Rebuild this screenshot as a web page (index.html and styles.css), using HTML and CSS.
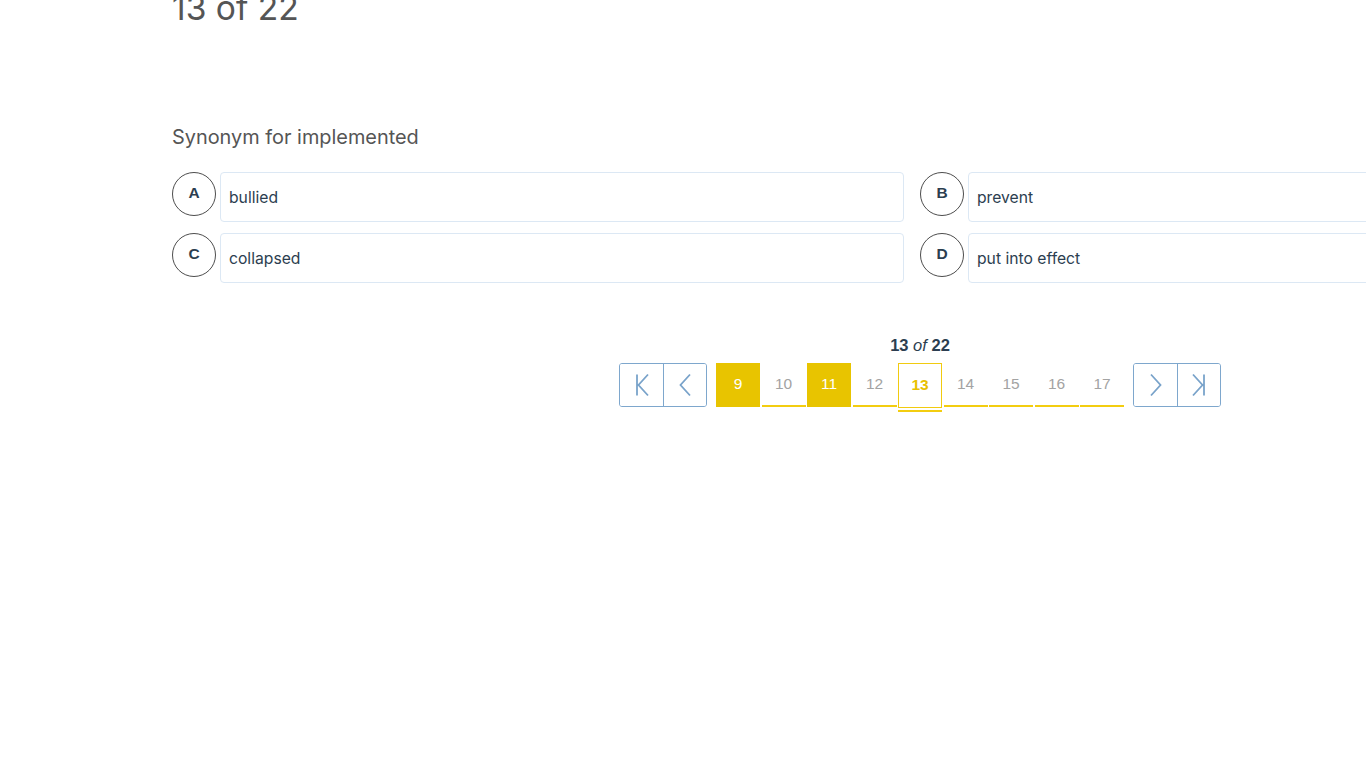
FILE: index.html
```html
<!DOCTYPE html>
<html lang="en">
<head>
<meta charset="utf-8">
<title>Quiz 13 of 22</title>
<link rel="stylesheet" href="styles.css">
</head>
<body>
<main class="quiz">
  <h1 class="quiz-title">13 of 22</h1>
  <p class="question">Synonym for implemented</p>
  <div class="options">
    <div class="option"><span class="letter">A</span><div class="answer">bullied</div></div>
    <div class="option"><span class="letter">B</span><div class="answer">prevent</div></div>
    <div class="option"><span class="letter">C</span><div class="answer">collapsed</div></div>
    <div class="option"><span class="letter">D</span><div class="answer">put into effect</div></div>
  </div>
  <nav class="pager">
    <div class="pager-label"><b>13</b> <i>of</i> <b>22</b></div>
    <div class="pager-row">
      <div class="nav-group">
        <button class="nav-btn" aria-label="First">
          <svg width="20" height="24" viewBox="0 0 20 24"><path d="M5 1.5V22.5M16 1.5L6.5 12L16 22.5" fill="none" stroke="#79a3ca" stroke-width="1.8"/></svg>
        </button>
        <button class="nav-btn" aria-label="Previous">
          <svg width="20" height="24" viewBox="0 0 20 24"><path d="M15 1.5L5.5 12L15 22.5" fill="none" stroke="#79a3ca" stroke-width="1.8"/></svg>
        </button>
      </div>
      <div class="pages">
        <span class="page done">9</span>
        <span class="page line">10</span>
        <span class="page done">11</span>
        <span class="page line">12</span>
        <span class="current-wrap"><span class="page current">13</span></span>
        <span class="page line">14</span>
        <span class="page line">15</span>
        <span class="page line">16</span>
        <span class="page line">17</span>
      </div>
      <div class="nav-group">
        <button class="nav-btn" aria-label="Next">
          <svg width="20" height="24" viewBox="0 0 20 24"><path d="M5 1.5L14.5 12L5 22.5" fill="none" stroke="#79a3ca" stroke-width="1.8"/></svg>
        </button>
        <button class="nav-btn" aria-label="Last">
          <svg width="20" height="24" viewBox="0 0 20 24"><path d="M4 1.5L13.5 12L4 22.5M15 1.5V22.5" fill="none" stroke="#79a3ca" stroke-width="1.8"/></svg>
        </button>
      </div>
    </div>
  </nav>
</main>
</body>
</html>
```

FILE: styles.css
```css
html {
  overflow: hidden;
  background: #ffffff;
}

body {
  margin: 0;
  padding: 0;
  min-height: 100vh;
}

.quiz {
  margin-left: 172px;
  width: 1496px;
  font-family: Inter, "Noto Sans", sans-serif;
}

.quiz-title {
  margin: -12px 0 0 0;
  font-size: 33.6px;
  line-height: 40px;
  font-weight: 400;
  color: #555555;
}

.question {
  margin: 96px 0 0 0;
  font-size: 19.9px;
  line-height: 26px;
  color: #555555;
}

.options {
  margin-top: 22px;
  display: grid;
  grid-template-columns: 1fr 1fr;
  row-gap: 11px;
}

.option {
  display: flex;
  align-items: flex-start;
  gap: 4px;
  padding-right: 16px;
}

.letter {
  flex: none;
  width: 42px;
  height: 40px;
  padding-bottom: 2px;
  border: 1px solid #4d4d4d;
  border-radius: 50%;
  display: flex;
  align-items: center;
  justify-content: center;
  font-family: "Liberation Sans", Arial, sans-serif;
  font-weight: 700;
  font-size: 15.5px;
  color: #2c3e50;
}

.answer {
  flex: 1;
  height: 50px;
  box-sizing: border-box;
  border: 1px solid #dce8f4;
  border-radius: 4px;
  padding-left: 8px;
  display: flex;
  align-items: center;
  font-size: 15.7px;
  color: #2c3e50;
}

.pager {
  margin-top: 52px;
  display: flex;
  flex-direction: column;
  align-items: center;
}

.pager-label {
  font-family: "Liberation Sans", Arial, sans-serif;
  font-size: 16.5px;
  line-height: 20px;
  color: #2c3e50;
}

.pager-label i {
  font-weight: 400;
}

.pager-row {
  margin-top: 8px;
  display: flex;
  align-items: flex-start;
  gap: 9px;
}

.nav-group {
  display: flex;
  border: 1px solid #7ea7cd;
  border-radius: 3px;
  overflow: hidden;
}

.nav-btn {
  width: 43px;
  height: 42px;
  padding: 0;
  margin: 0;
  border: 0;
  background: #ffffff;
  display: flex;
  align-items: center;
  justify-content: center;
}

.nav-btn + .nav-btn {
  border-left: 1px solid #7ea7cd;
}

.pages {
  display: flex;
  align-items: flex-start;
  gap: 1.5px;
}

.page {
  width: 44px;
  height: 44px;
  padding-bottom: 3px;
  box-sizing: border-box;
  display: flex;
  align-items: center;
  justify-content: center;
  font-family: "Liberation Sans", Arial, sans-serif;
  font-size: 15.5px;
  color: #a3a3a3;
}

.page.done {
  background: #e8c400;
  color: #ffffff;
}

.page.line {
  border-bottom: 2px solid #f3cd10;
  padding-bottom: 1px;
}

.current-wrap {
  display: block;
  padding-bottom: 2px;
  border-bottom: 2px solid #f3cd10;
}

.page.current {
  border: 1px solid #f1cb10;
  color: #e8c000;
  font-weight: 700;
  height: 45px;
  padding-bottom: 2px;
}
```
